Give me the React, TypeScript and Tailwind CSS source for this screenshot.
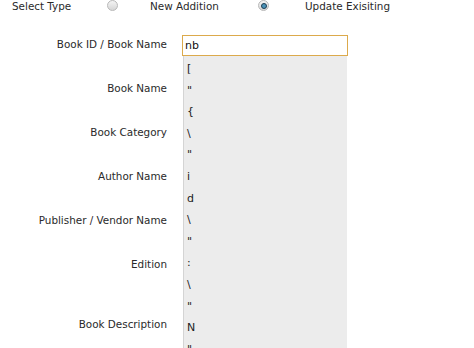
import React from "react";

const font = { fontFamily: '"DejaVu Sans", Verdana, sans-serif' };

const suggestions = ["[", "\"", "{", "\\", "\"", "i", "d", "\\", "\"", ":", "\\", "\"", "N", "\""];

function Radio({ checked }: { checked?: boolean }) {
    return (
        <span className="flex h-[11px] w-[11px] items-center justify-center rounded-full border border-[#b8b8b8] bg-gradient-to-b from-[#f4f4f4] to-[#d6d6d6]">
            {checked && <span className="h-[6px] w-[6px] rounded-full border border-[#1d3d52] bg-[#4a93b8]" />}
        </span>
    );
}

function Row({ label, h = "h-[44px]", children }: { label: string; h?: string; children?: React.ReactNode }) {
    return (
        <div className={`flex items-center ${h}`}>
            <div className="w-[167px] shrink-0 whitespace-nowrap text-right">{label}</div>
            <div className="ml-[15px] flex-1">{children}</div>
        </div>
    );
}

export default function App() {
    return (
        <div className="h-[348px] w-[474px] overflow-hidden bg-white text-[10.4px] text-[#2a2a2a]" style={font}>
            {/* type selector */}
            <div className="flex h-[14px] items-center">
                <span className="ml-[12px] w-[95px]">Select Type</span>
                <span className="-mt-[3px]"><Radio /></span>
                <span className="ml-[32px] w-[108px]">New Addition</span>
                <span className="-mt-[3px]"><Radio checked /></span>
                <span className="ml-[36px]">Update Exisiting</span>
            </div>

            <div className="mt-[9px]">
                <Row label="Book ID / Book Name">
                    <div className="relative w-[166px]">
                        <input
                            readOnly
                            value="nb"
                            className="h-[21px] w-full border border-[#dcaa4c] px-[2px] text-[11px] text-[#111] outline-none"
                            style={font}
                        />
                        <div className="absolute left-[1px] top-[21px] z-10 h-[300px] w-[164px] border-l border-[#d4d4d4] bg-[#ececec] pt-[3px]">
                            {suggestions.map((s, i) => (
                                <div key={i} className="flex h-[21.6px] items-center pl-[3px] text-[11px] text-[#222]">
                                    {s}
                                </div>
                            ))}
                        </div>
                    </div>
                </Row>
                <Row label="Book Name" />
                <Row label="Book Category" />
                <Row label="Author Name" />
                <Row label="Publisher / Vendor Name" />
                <Row label="Edition" />
                <Row label="Book Description" h="h-[76px]" />
            </div>
        </div>
    );
}
